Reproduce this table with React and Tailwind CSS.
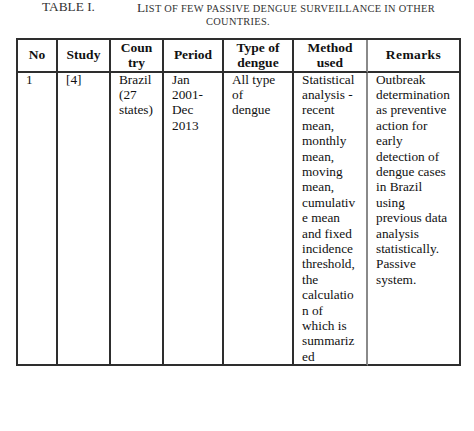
import React from "react";

const columns = [
  { id: "no", head: ["No"], w: "w-[40px]", body: ["1"] },
  { id: "study", head: ["Study"], w: "w-[53px]", body: ["[4]"] },
  { id: "country", head: ["Coun", "try"], w: "w-[53px]", body: ["Brazil", "(27", "states)"] },
  { id: "period", head: ["Period"], w: "w-[60px]", body: ["Jan", "2001-", "Dec", "2013"] },
  { id: "type", head: ["Type of", "dengue"], w: "w-[70px]", body: ["All type", "of", "dengue"] },
  {
    id: "method",
    head: ["Method", "used"],
    w: "w-[74px]",
    light: true,
    body: [
      "Statistical",
      "analysis -",
      "recent",
      "mean,",
      "monthly",
      "mean,",
      "moving",
      "mean,",
      "cumulativ",
      "e mean",
      "and fixed",
      "incidence",
      "threshold,",
      "the",
      "calculatio",
      "n of",
      "which is",
      "summariz",
      "ed",
    ],
  },
  {
    id: "remarks",
    head: ["Remarks"],
    w: "w-[93px]",
    body: [
      "Outbreak",
      "determination",
      "as preventive",
      "action for",
      "early",
      "detection of",
      "dengue cases",
      "in Brazil",
      "using",
      "previous data",
      "analysis",
      "statistically.",
      "Passive",
      "system.",
    ],
  },
];

const Lines = ({ lines }) =>
  lines.map((line, i) => (
    <span key={i} className="block whitespace-nowrap">
      {line}
    </span>
  ));

export default function App() {
  return (
    <div className="w-[474px] h-[431px] overflow-hidden bg-white text-[#111] font-['Liberation_Serif','Times_New_Roman',serif]">
      {/* Caption */}
      <div className="text-center text-[#333] leading-[13px]">
        <div className="flex justify-center gap-[42px] pl-[3px]">
          <span className="text-[13.3px]">TABLE I.</span>
          <span className="whitespace-nowrap">
            <span className="text-[13.3px]">L</span>
            <span className="text-[10.4px] tracking-[0.3px]">
              IST OF FEW PASSIVE DENGUE SURVEILLANCE IN OTHER
            </span>
          </span>
        </div>
        <div className="text-[10.4px] tracking-[0.3px] pl-[2px]">COUNTRIES.</div>
      </div>

      {/* Table */}
      <div className="mt-[10px] ml-[16px] w-[445px] border-l-2 border-t-2 border-[#2e2e2e]">
        <div className="flex">
          {columns.map((col) => (
            <div
              key={col.id}
              className={`${col.w} h-[33px] flex flex-col items-center justify-center border-b-2 border-b-[#2e2e2e] border-r-2 ${
                col.light ? "border-r-[#8a8a8a]" : "border-r-[#2e2e2e]"
              } text-[13.5px] font-bold leading-[14.5px] text-center ${
                col.id === "remarks" ? "tracking-[0.4px]" : ""
              }`}
            >
              <Lines lines={col.head} />
            </div>
          ))}
        </div>
        <div className="flex">
          {columns.map((col) => (
            <div
              key={col.id}
              className={`${col.w} h-[293px] pl-2 border-b-2 border-b-[#2e2e2e] border-r-2 ${
                col.light ? "border-r-[#8a8a8a]" : "border-r-[#2e2e2e]"
              } text-[13.3px] leading-[15.4px]`}
            >
              <div className="-mt-[1.5px]">
                <Lines lines={col.body} />
              </div>
            </div>
          ))}
        </div>
      </div>
    </div>
  );
}
